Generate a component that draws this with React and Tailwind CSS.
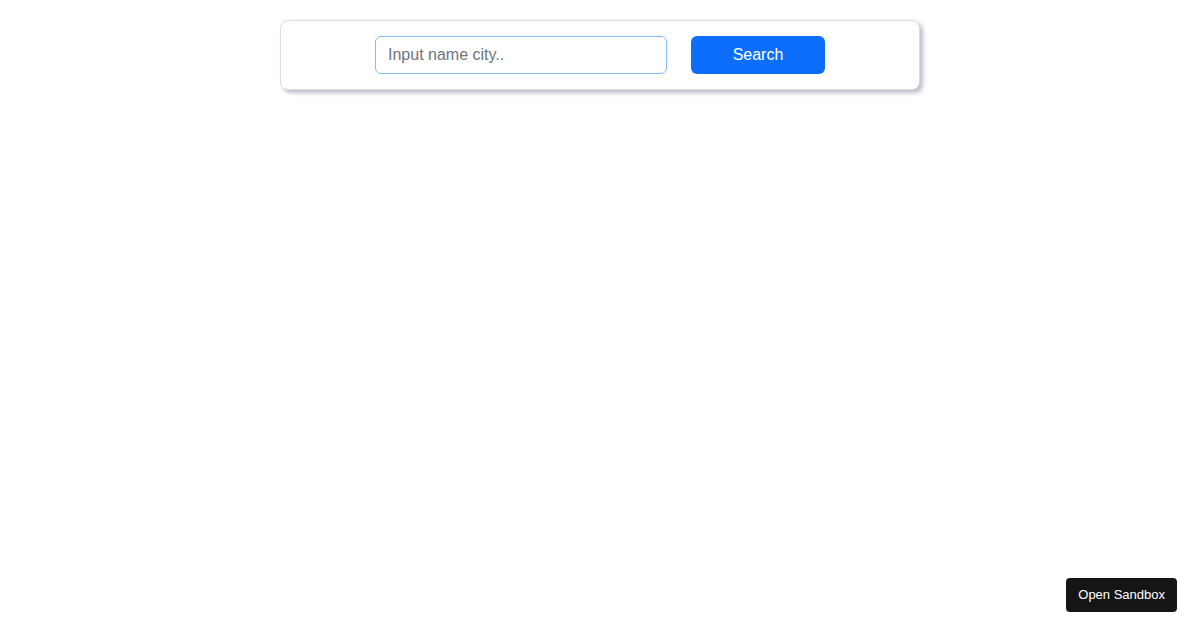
import { useState } from 'react'

export default function App() {
    const [city, setCity] = useState('')

    return (
        <div className="min-h-screen bg-white font-['Liberation_Sans',Arial,sans-serif]">
            <div className="pt-5 flex justify-center">
                <div className="w-[640px] h-[70px] flex items-center justify-center gap-6 border border-[#dcdcdc] rounded-lg bg-white shadow-[3px_3px_4px_rgba(90,90,130,0.4)]">
                    <input
                        autoFocus
                        type="text"
                        value={city}
                        onChange={e => setCity(e.target.value)}
                        placeholder="Input name city.."
                        className="w-[292px] h-[38px] px-3 text-base text-[#212529] placeholder:text-[#6c757d] border border-[#86b7fe] rounded-md outline-none caret-[#212529]"
                    />
                    <button className="w-[134px] h-[38px] bg-[#0d6efd] text-white text-base rounded-md">
                        Search
                    </button>
                </div>
            </div>

            <button className="fixed right-[23px] bottom-[18px] h-[34px] px-3 bg-[#151515] text-white text-[13px] rounded">
                Open Sandbox
            </button>
        </div>
    )
}
